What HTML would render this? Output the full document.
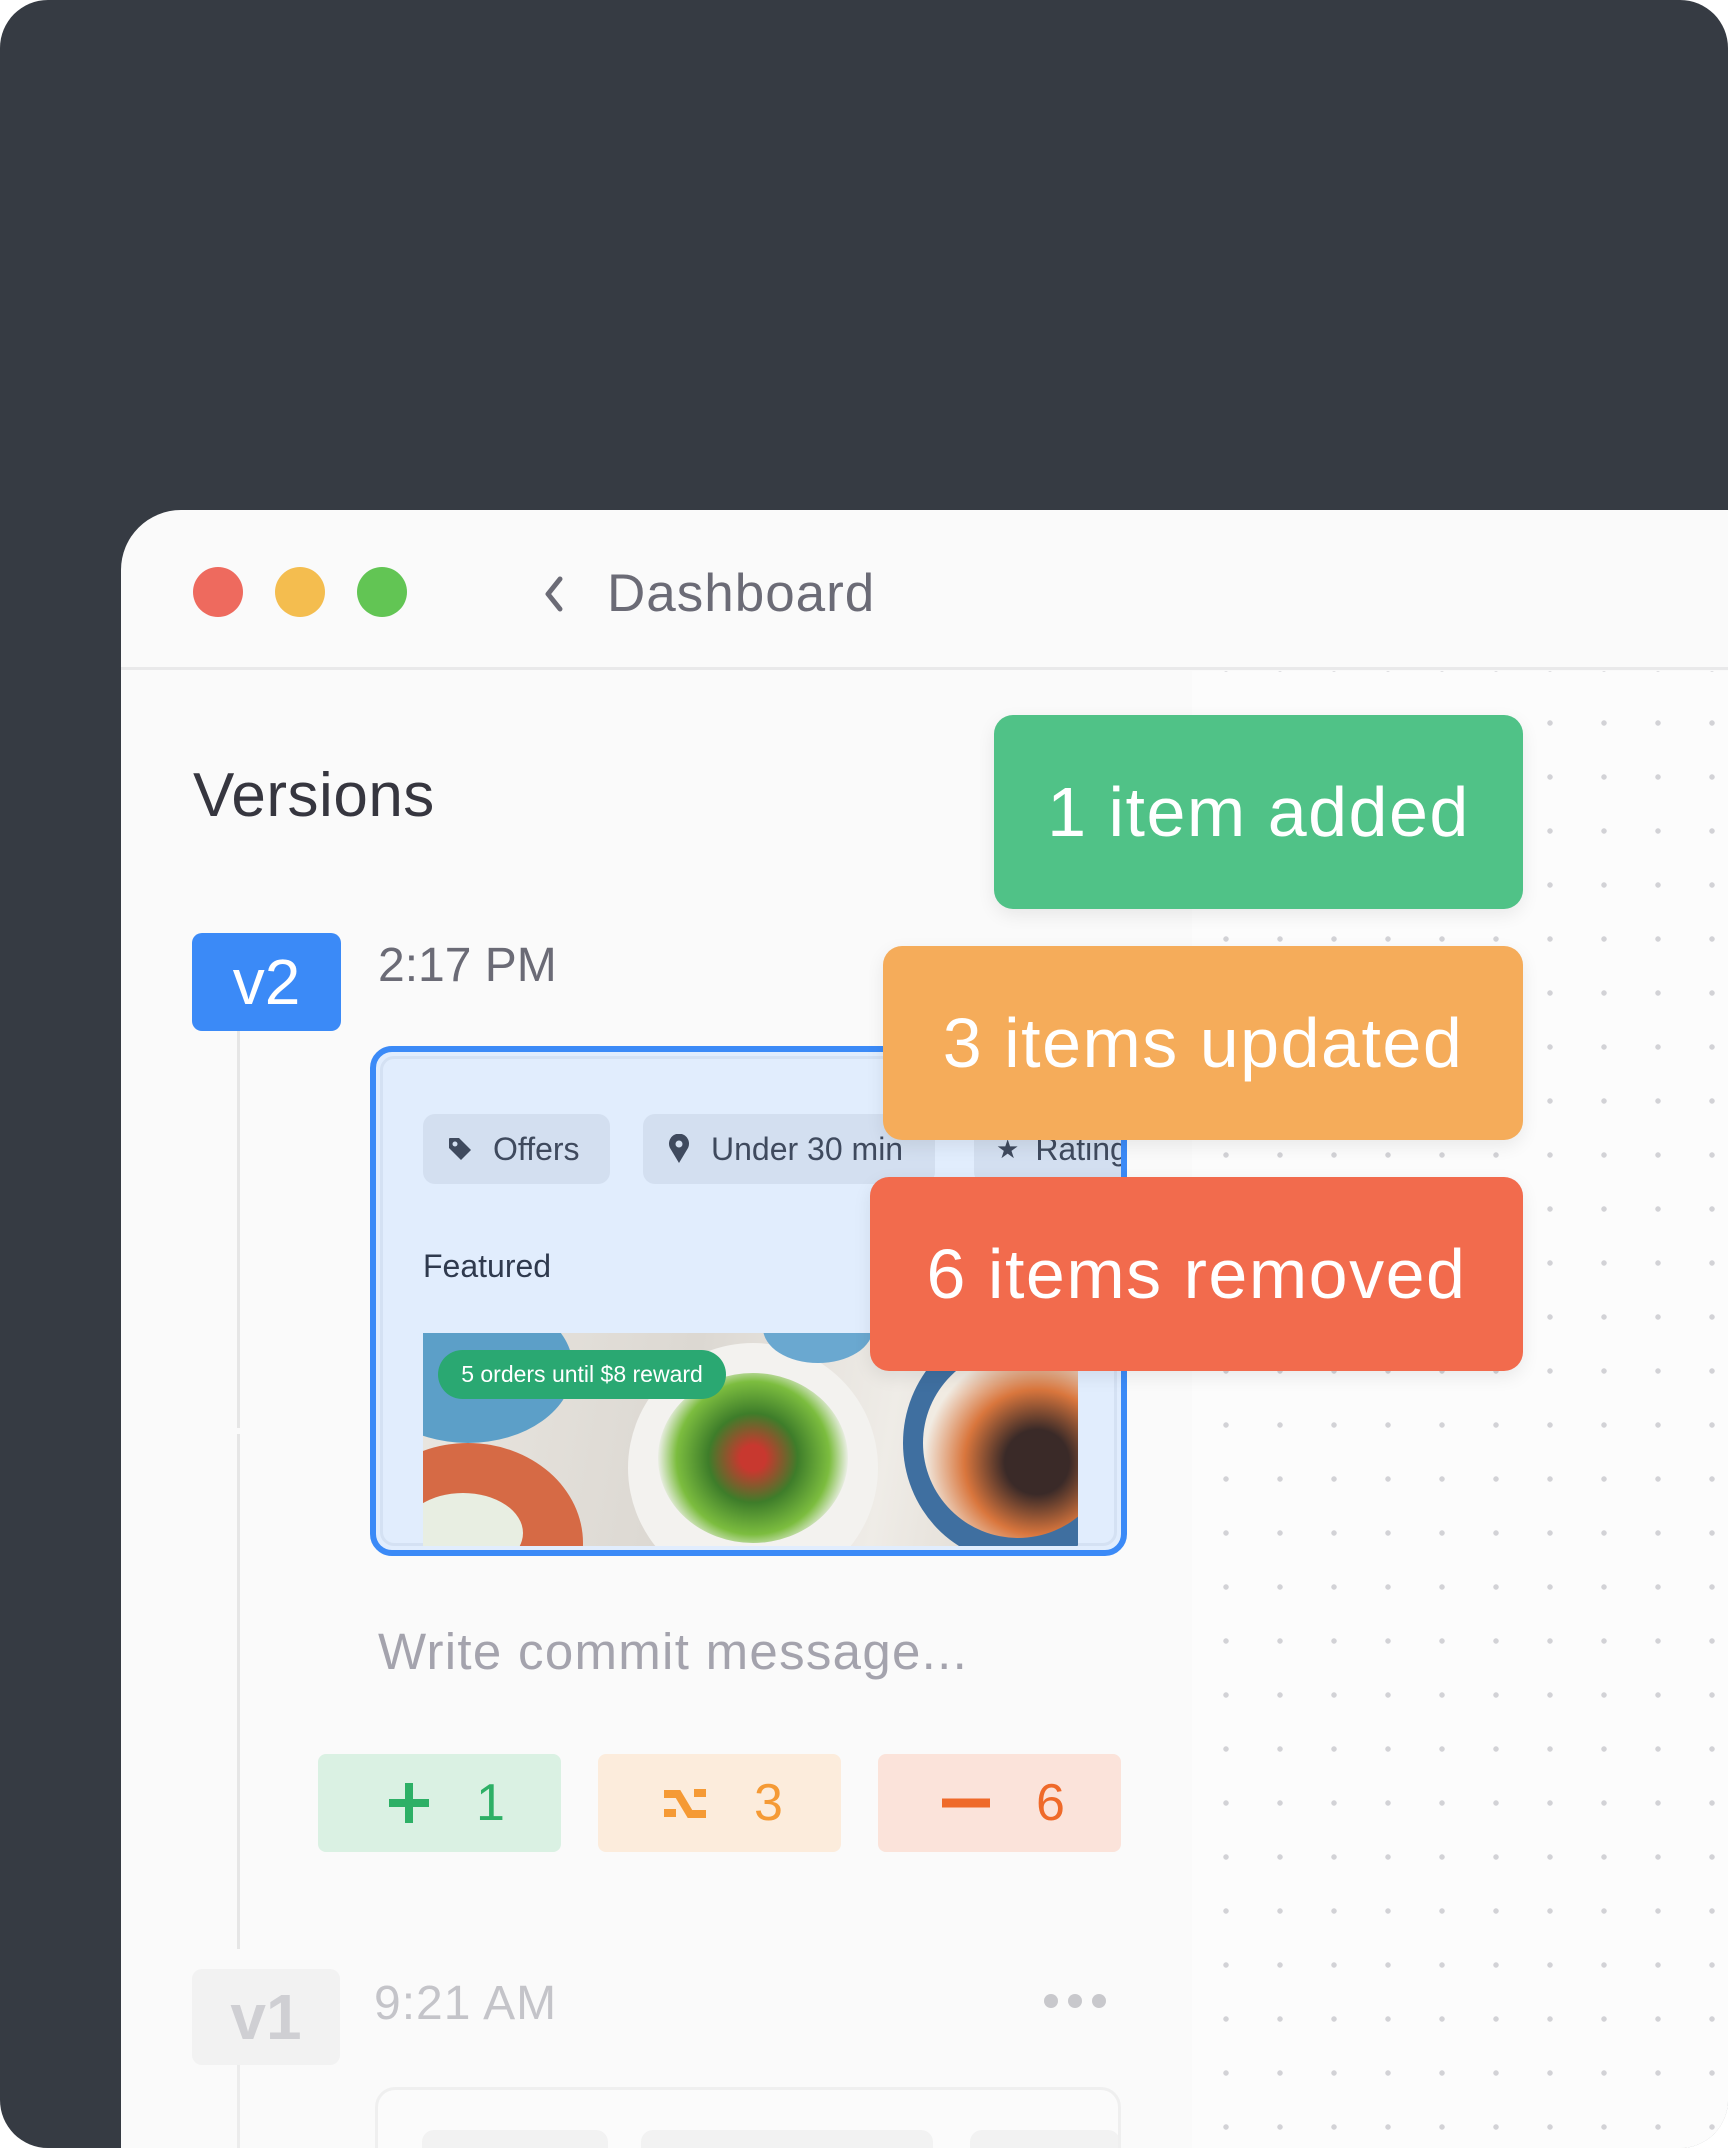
<!DOCTYPE html>
<html><head><meta charset="utf-8"><style>
*{margin:0;padding:0;box-sizing:border-box}
html,body{width:1728px;height:2148px;overflow:hidden;background:#fff;font-family:"Liberation Sans",sans-serif}
.outer{position:absolute;left:0;top:0;width:1728px;height:2148px;background:#363b43;border-radius:48px;overflow:hidden}
.win{position:absolute;left:121px;top:510px;width:1607px;height:1638px;background:#fafafa;border-top-left-radius:60px;overflow:hidden}
.abs{position:absolute}
.dots{position:absolute;left:1071px;top:161px;width:536px;height:1477px;background-color:#fcfcfc;
background-image:radial-gradient(circle,#d2d2d6 2.4px,transparent 3px);background-size:54px 54px;background-position:7px 25px}
.tl{position:absolute;top:57px;width:50px;height:50px;border-radius:50%}
.badge{position:absolute;left:0;color:#fff;font-size:70px;border-radius:19px;display:flex;align-items:center;justify-content:center;letter-spacing:1.5px;box-shadow:0 6px 18px rgba(0,0,0,.08)}
.chip{position:absolute;top:62px;height:70px;background:#d3dff0;border-radius:12px;color:#3f4a5e;font-size:32px;display:flex;align-items:center}
.stat{position:absolute;width:243px;height:98px;border-radius:8px;font-size:52px;display:flex;align-items:center}
</style></head><body>
<div class="outer">
<div class="win">
  <div class="dots"></div>
  <div style="position:absolute;left:0;top:157px;width:1607px;height:3px;background:#e9e9ea"></div>
  <div class="tl" style="left:72px;background:#ee6a5e"></div>
  <div class="tl" style="left:154px;background:#f4bd4f"></div>
  <div class="tl" style="left:236px;background:#62c554"></div>
  <svg class="abs" style="left:421px;top:64px" width="24" height="40" viewBox="0 0 24 40"><path d="M18 5 L6 20 L18 35" fill="none" stroke="#6b6b76" stroke-width="5" stroke-linecap="round" stroke-linejoin="round"/></svg>
  <div class="abs" style="left:486px;top:53px;font-size:53px;color:#6b6b76;letter-spacing:1px">Dashboard</div>
  <div class="abs" style="left:72px;top:250px;font-size:62px;color:#36363f;letter-spacing:0.5px">Versions</div>

  <div class="abs" style="left:116px;top:521px;width:3px;height:397px;background:#e6e6e6"></div>
  <div class="abs" style="left:116px;top:924px;width:3px;height:515px;background:#e6e6e6"></div>
  <div class="abs" style="left:116px;top:1555px;width:3px;height:83px;background:#ececec"></div>

  <div class="abs" style="left:71px;top:423px;width:149px;height:98px;background:#3b8af7;border-radius:10px;color:#fff;font-size:64px;display:flex;align-items:center;justify-content:center">v2</div>
  <div class="abs" style="left:257px;top:428px;font-size:48px;color:#6b6b76">2:17 PM</div>

  <div class="abs" style="left:249px;top:536px;width:757px;height:510px;border:6px solid #3b8af7;border-radius:22px;background:#e1edfd;overflow:hidden">
    <div class="abs" style="left:4px;top:4px;right:4px;bottom:4px;border:3px solid #d4e1f3;border-radius:14px"></div>
    <div class="chip" style="left:47px;width:187px"><svg style="margin-left:24px" width="26" height="26" viewBox="0 0 26 26"><path d="M2 3 Q2 2 3 2 L12 2 L24 14 L14 24 L2 12 Z" fill="#3f4a5e"/><circle cx="8" cy="8" r="2.5" fill="#d3dff0"/></svg><span style="margin-left:20px">Offers</span></div>
    <div class="chip" style="left:267px;width:292px"><svg style="margin-left:24px" width="24" height="30" viewBox="0 0 24 30"><path d="M12 29 L3 14 A10 10 0 1 1 21 14 Z" fill="#3f4a5e"/><circle cx="12" cy="10" r="3.5" fill="#d3dff0"/></svg><span style="margin-left:20px">Under 30 min</span></div>
    <div class="chip" style="left:598px;width:200px"><span style="margin-left:22px;font-size:26px">★</span><span style="margin-left:16px">Rating</span></div>
    <div class="abs" style="left:47px;top:196px;font-size:32px;color:#2f3a4e">Featured</div>
    <div class="abs" style="left:47px;top:281px;width:655px;height:213px;overflow:hidden;background:linear-gradient(100deg,#e9e6e0,#dcd8d2 40%,#efece7 70%,#d9d2c8)">
      <div class="abs" style="left:-60px;top:-40px;width:210px;height:150px;border-radius:50%;background:#5c9fc8"></div>
      <div class="abs" style="left:-70px;top:110px;width:230px;height:200px;border-radius:50%;background:#d66a45"></div>
      <div class="abs" style="left:-20px;top:160px;width:120px;height:80px;border-radius:50%;background:#e8eee2"></div>
      <div class="abs" style="left:205px;top:10px;width:250px;height:250px;border-radius:50%;background:#f3f2ef"></div>
      <div class="abs" style="left:235px;top:40px;width:190px;height:170px;border-radius:50%;background:radial-gradient(circle,#c8382f 10%,#3e7d2a 35%,#7cbd3f 60%,#eef0ea 75%)"></div>
      <div class="abs" style="left:480px;top:-10px;width:230px;height:240px;border-radius:50%;background:#3f6fa0"></div>
      <div class="abs" style="left:500px;top:15px;width:190px;height:190px;border-radius:50%;background:radial-gradient(circle at 60% 60%,#3a2a28 20%,#d9763d 45%,#f1ebe2 70%)"></div>
      <div class="abs" style="left:340px;top:-40px;width:110px;height:70px;border-radius:50%;background:#6aa8d0"></div>
    </div>
    <div class="abs" style="left:62px;top:298px;width:288px;height:49px;border-radius:25px;background:#2aa872;color:#fff;font-size:23px;display:flex;align-items:center;justify-content:center">5 orders until $8 reward</div>
  </div>

  <div class="badge" style="left:873px;top:205px;width:529px;height:194px;background:#50c287">1 item added</div>
  <div class="badge" style="left:762px;top:436px;width:640px;height:194px;background:#f5ac5a">3 items updated</div>
  <div class="badge" style="left:749px;top:667px;width:653px;height:194px;background:#f26b4d">6 items removed</div>

  <div class="abs" style="left:257px;top:1112px;font-size:51px;color:#a4a3ad;letter-spacing:1.3px">Write commit message...</div>

  <div class="stat" style="left:197px;top:1244px;background:#daf1e3;color:#2db066"><svg style="margin-left:68px" width="46" height="46" viewBox="0 0 46 46"><path d="M23 3V43M3 23H43" stroke="#2db066" stroke-width="8"/></svg><span style="margin-left:44px">1</span></div>
  <div class="stat" style="left:477px;top:1244px;background:#fcecdc;color:#f59a35"><svg style="margin-left:66px" width="46" height="34" viewBox="0 0 46 34"><path d="M0 8H14L26 28H42M0 27H12M30 7H42" stroke="#f59a35" stroke-width="8" fill="none"/></svg><span style="margin-left:44px">3</span></div>
  <div class="stat" style="left:757px;top:1244px;background:#fbe3da;color:#ef6a2a"><svg style="margin-left:64px" width="48" height="12" viewBox="0 0 48 12"><path d="M0 6H48" stroke="#ef6a2a" stroke-width="9"/></svg><span style="margin-left:46px">6</span></div>

  <div class="abs" style="left:71px;top:1459px;width:148px;height:96px;background:#f2f2f2;border-radius:10px;color:#cfcfd3;font-size:64px;font-weight:bold;display:flex;align-items:center;justify-content:center">v1</div>
  <div class="abs" style="left:253px;top:1466px;font-size:48px;color:#c4c4c9;letter-spacing:1px">9:21 AM</div>
  <div class="abs" style="left:923px;top:1484px;display:flex;gap:10px"><div style="width:14px;height:14px;border-radius:50%;background:#c8c8cc"></div><div style="width:14px;height:14px;border-radius:50%;background:#c8c8cc"></div><div style="width:14px;height:14px;border-radius:50%;background:#c8c8cc"></div></div>
  <div class="abs" style="left:254px;top:1577px;width:746px;height:61px;border:3px solid #efefef;border-bottom:none;border-radius:20px 20px 0 0;background:#fbfbfb;overflow:hidden">
    <div class="abs" style="left:44px;top:40px;width:186px;height:30px;background:#f2f2f2;border-radius:12px 12px 0 0"></div>
    <div class="abs" style="left:263px;top:40px;width:292px;height:30px;background:#f2f2f2;border-radius:12px 12px 0 0"></div>
    <div class="abs" style="left:592px;top:40px;width:150px;height:30px;background:#f2f2f2;border-radius:12px 12px 0 0"></div>
  </div>
</div>
</div>
</body></html>
